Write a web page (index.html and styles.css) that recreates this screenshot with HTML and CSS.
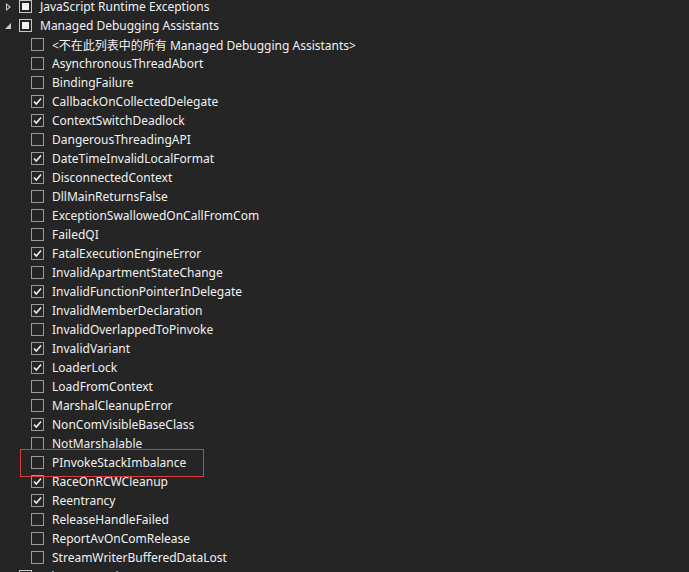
FILE: index.html
```html
<!DOCTYPE html>
<html>
<head>
  <meta charset="utf-8">
  <link rel="stylesheet" href="styles.css">
</head>
<body>
  <div class="tree">
    <div class="row top">
      <span class="twisty collapsed"></span>
      <span class="box partial"></span>
      <span class="label">JavaScript Runtime Exceptions</span>
    </div>
    <div class="row top">
      <span class="twisty expanded"></span>
      <span class="box partial"></span>
      <span class="label">Managed Debugging Assistants</span>
    </div>
    <div id="children"></div>
    <div class="row top">
      <span class="twisty collapsed"></span>
      <span class="box partial"></span>
      <span class="label">Win32 Exceptions</span>
    </div>
  </div>

  <script>
    var items = [
      ['<不在此列表中的所有 Managed Debugging Assistants>', false],
      ['AsynchronousThreadAbort', false],
      ['BindingFailure', false],
      ['CallbackOnCollectedDelegate', true],
      ['ContextSwitchDeadlock', true],
      ['DangerousThreadingAPI', false],
      ['DateTimeInvalidLocalFormat', true],
      ['DisconnectedContext', true],
      ['DllMainReturnsFalse', false],
      ['ExceptionSwallowedOnCallFromCom', false],
      ['FailedQI', false],
      ['FatalExecutionEngineError', true],
      ['InvalidApartmentStateChange', false],
      ['InvalidFunctionPointerInDelegate', true],
      ['InvalidMemberDeclaration', true],
      ['InvalidOverlappedToPinvoke', false],
      ['InvalidVariant', true],
      ['LoaderLock', true],
      ['LoadFromContext', false],
      ['MarshalCleanupError', false],
      ['NonComVisibleBaseClass', true],
      ['NotMarshalable', false],
      ['PInvokeStackImbalance', false],
      ['RaceOnRCWCleanup', true],
      ['Reentrancy', true],
      ['ReleaseHandleFailed', false],
      ['ReportAvOnComRelease', false],
      ['StreamWriterBufferedDataLost', false]
    ];

    var check = '<svg width="11" height="11" viewBox="0 0 11 11"><path d="M2 5.5 L4.3 8 L9 2.5" fill="none" stroke="#f1f1f1" stroke-width="1.6"/></svg>';
    var list = document.getElementById('children');

    items.forEach(function(item) {
      var row = document.createElement('div');
      row.className = 'row child';
      if (item[0] === 'PInvokeStackImbalance') row.className += ' marked';
      row.innerHTML = '<span class="box">' + (item[1] ? check : '') + '</span>' +
        '<span class="label"></span>';
      row.querySelector('.label').textContent = item[0];
      list.appendChild(row);
    });
  </script>
</body>
</html>
```

FILE: styles.css
```css
body {
  margin: 0;
  background: #252526;
  color: #f1f1f1;
  font-family: 'Noto Sans', 'Noto Sans CJK SC', sans-serif;
  font-size: 12px;
  overflow: hidden;
}

.tree {
  margin-top: -3px;
}

.row {
  display: flex;
  align-items: center;
  height: 19px;
  white-space: nowrap;
}

.row.top {
  padding-left: 5px;
}

.row.child {
  padding-left: 31px;
}

.twisty {
  width: 6px;
  height: 8px;
  margin-right: 8px;
  position: relative;
}

.twisty.collapsed::before {
  content: '';
  position: absolute;
  left: 1px;
  top: 0;
  border-left: 5px solid #c8c8c8;
  border-top: 4px solid transparent;
  border-bottom: 4px solid transparent;
}

.twisty.collapsed::after {
  content: '';
  position: absolute;
  left: 2px;
  top: 2px;
  border-left: 2px solid #252526;
  border-top: 2px solid transparent;
  border-bottom: 2px solid transparent;
}

.twisty.expanded::before {
  content: '';
  position: absolute;
  left: 0;
  top: 1px;
  border-right: 6px solid #c8c8c8;
  border-top: 6px solid transparent;
}

.box {
  width: 11px;
  height: 11px;
  border: 1px solid #9a9a9a;
  display: flex;
  align-items: center;
  justify-content: center;
  margin-right: 8px;
  flex-shrink: 0;
}

.box.partial {
  border-color: #c8c8c8;
}

.box.partial::after {
  content: '';
  width: 7px;
  height: 7px;
  background: #f1f1f1;
}

.marked {
  position: relative;
}

.marked::after {
  content: '';
  position: absolute;
  left: 20px;
  top: -4px;
  width: 182px;
  height: 26px;
  border: 1px solid #e0393a;
}
```
